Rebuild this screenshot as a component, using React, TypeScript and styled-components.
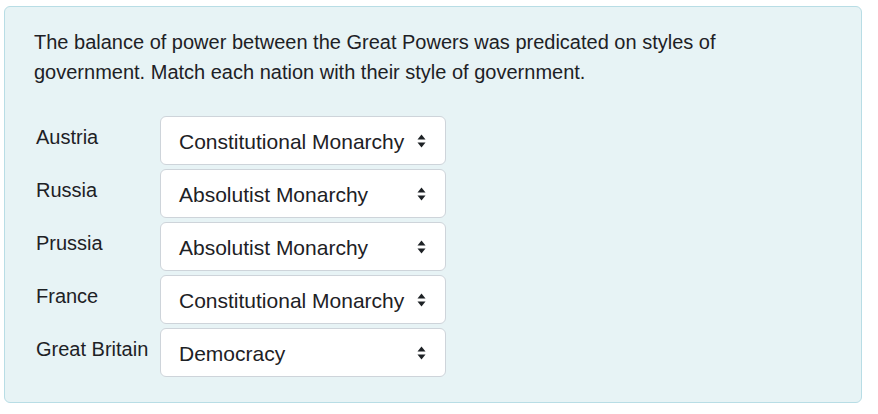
import React from "react";
import styled, { createGlobalStyle } from "styled-components";

const Global = createGlobalStyle`
  html, body { margin: 0; padding: 0; background: #ffffff; }
  body { font-family: "Liberation Sans", Arial, sans-serif; color: #1d2125; }
`;

const Page = styled.div`
  padding: 6px 16px 0 4px;
`;

const Card = styled.div`
  background: #e7f3f5;
  border: 1px solid #b8dde5;
  border-radius: 6px;
  padding: 20px 29px 24px 29px;
  height: 397px;
  box-sizing: border-box;
`;

const Prompt = styled.p`
  margin: 0 0 29px 0;
  font-size: 20px;
  line-height: 30px;
`;

const List = styled.div`
  display: flex;
  flex-direction: column;
  gap: 4px;
`;

const Row = styled.div`
  display: flex;
  align-items: flex-start;
`;

const Label = styled.div`
  width: 124px;
  padding: 10px 0 0 2px;
  font-size: 20px;
  line-height: 22px;
  white-space: nowrap;
`;

const SelectBox = styled.div`
  position: relative;
  box-sizing: border-box;
  width: 286px;
  height: 49px;
  background: #ffffff;
  border: 1px solid #ced4da;
  border-radius: 6px;
  display: flex;
  align-items: center;
  padding: 2px 0 0 18px;
  font-size: 21px;
  color: #1d2125;
`;

const Arrow = styled.svg`
  position: absolute;
  right: 19px;
  top: 50%;
  transform: translateY(-50%);
`;

const rows: [string, string][] = [
  ["Austria", "Constitutional Monarchy"],
  ["Russia", "Absolutist Monarchy"],
  ["Prussia", "Absolutist Monarchy"],
  ["France", "Constitutional Monarchy"],
  ["Great Britain", "Democracy"],
];

function UpDown() {
  return (
    <Arrow width="9" height="14" viewBox="0 0 9 14">
      <path d="M4.5 0.5 L8.5 5.5 L0.5 5.5 Z" fill="#1d2125" />
      <path d="M4.5 13.5 L8.5 8.5 L0.5 8.5 Z" fill="#1d2125" />
    </Arrow>
  );
}

export default function App() {
  return (
    <Page>
      <Global />
      <Card>
        <Prompt>
          The balance of power between the Great Powers was predicated on styles of
          government. Match each nation with their style of government.
        </Prompt>
        <List>
          {rows.map(([n, v]) => (
            <Row key={n}>
              <Label>{n}</Label>
              <SelectBox>
                {v}
                <UpDown />
              </SelectBox>
            </Row>
          ))}
        </List>
      </Card>
    </Page>
  );
}
